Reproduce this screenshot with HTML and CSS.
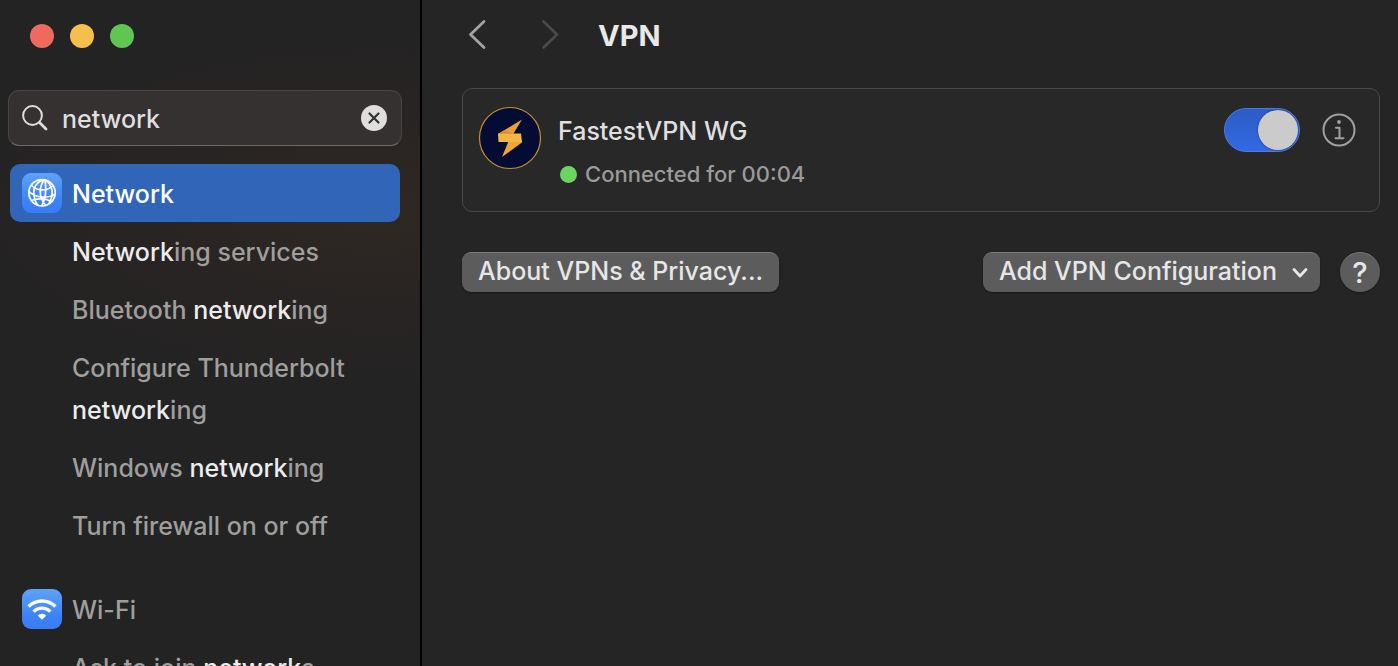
FILE: index.html
```html
<!DOCTYPE html>
<html lang="en">
<head>
    <meta charset="utf-8">
    <meta name="viewport" content="width=device-width, initial-scale=1.0">
    <title>VPN</title>
    <link rel="stylesheet" href="styles.css">
</head>
<body>
    <div class="window">
        <aside class="sidebar">
            <div class="lights">
                <button class="light red" aria-label="Close"></button>
                <button class="light yellow" aria-label="Minimize"></button>
                <button class="light green" aria-label="Zoom"></button>
            </div>
            <div class="search">
                <svg class="search-icon" width="26" height="26" viewBox="0 0 26 26" fill="none" stroke="#dfdedd" stroke-linecap="round">
                    <circle cx="10.5" cy="10.5" r="9.4" stroke-width="2"/>
                    <path d="M17.5 17.5L24 24" stroke-width="2.8"/>
                </svg>
                <input type="text" class="search-text" value="network" aria-label="Search">
                <button class="clear" aria-label="Clear">
                    <svg width="26" height="26" viewBox="0 0 26 26">
                        <circle cx="13" cy="13" r="13" fill="#dfdedd"/>
                        <path d="M8.5 8.5L17.5 17.5M17.5 8.5L8.5 17.5" stroke="#353130" stroke-width="2.2" stroke-linecap="round"/>
                    </svg>
                </button>
            </div>
            <nav class="results">
                <ul class="group">
                    <li>
                        <a href="#" class="row active">
                            <svg class="icon" width="40" height="40" viewBox="0 0 40 40">
                                <defs>
                                    <linearGradient id="blue" x1="0" y1="0" x2="0" y2="1">
                                        <stop offset="0" stop-color="#5fa2f9"/>
                                        <stop offset="0.7" stop-color="#3b82f7"/>
                                        <stop offset="1" stop-color="#3a7df6"/>
                                    </linearGradient>
                                </defs>
                                <rect width="40" height="40" rx="9" fill="url(#blue)"/>
                                <g fill="none" stroke="#fff" stroke-width="1.7" stroke-linecap="round">
                                    <circle cx="20" cy="19.8" r="13.2"/>
                                    <path d="M21 6.8C15 9.500 11.500 14 11.800 20C12 25 13.500 29 15.500 31.800"/>
                                    <path d="M22 6.800C18 13 17.500 20 19.500 25.500C20.500 28.500 22 30.500 23.500 32"/>
                                    <path d="M23 6.800C24 13 24 20 22.500 25.500C22 28 21 30.500 20 32.500"/>
                                    <path d="M24 7.300C28.500 11 30.500 16 30.200 21C30 24.500 28.500 28 26.500 31"/>
                                    <path d="M9.500 12.500C14.500 17.500 24 19 30.500 13"/>
                                    <path d="M7 18.500C12 24 25 26.500 32.800 21.500"/>
                                    <path d="M10 27.300C15 25 24 25.500 29.500 28.500"/>
                                </g>
                            </svg>
                            <span class="label">Network</span>
                        </a>
                    </li>
                    <li><a href="#" class="row"><span class="label"><b>Network</b>ing services</span></a></li>
                    <li><a href="#" class="row"><span class="label">Bluetooth <b>network</b>ing</span></a></li>
                    <li><a href="#" class="row"><span class="label">Configure Thunderbolt <b>network</b>ing</span></a></li>
                    <li><a href="#" class="row"><span class="label">Windows <b>network</b>ing</span></a></li>
                    <li><a href="#" class="row"><span class="label">Turn firewall on or off</span></a></li>
                </ul>
                <ul class="group">
                    <li>
                        <a href="#" class="row">
                            <svg class="icon" width="40" height="40" viewBox="0 0 40 40">
                                <rect width="40" height="40" rx="9" fill="url(#blue)"/>
                                <g fill="none" stroke="#fff" stroke-width="3.4">
                                    <path d="M6.600 17.500A19 19 0 0 1 33.400 17.500"/>
                                    <path d="M11.600 22.600A12 12 0 0 1 28.400 22.600"/>
                                </g>
                                <path d="M20 30.800L15.700 26.600A6.200 6.200 0 0 1 24.300 26.600Z" fill="#fff"/>
                            </svg>
                            <span class="label">Wi-Fi</span>
                        </a>
                    </li>
                    <li><a href="#" class="row"><span class="label">Ask to join <b>network</b>s</span></a></li>
                </ul>
            </nav>
        </aside>
        <main class="content">
            <header class="top">
                <button class="nav" aria-label="Back">
                    <svg width="20" height="32" viewBox="0 0 20 32" fill="none" stroke="#a3a3a3" stroke-width="2.8" stroke-linecap="round" stroke-linejoin="round">
                        <path d="M17 2.500L3.500 15.500L17 28.500"/>
                    </svg>
                </button>
                <button class="nav" aria-label="Forward" disabled>
                    <svg width="20" height="32" viewBox="0 0 20 32" fill="none" stroke="#4a4a4a" stroke-width="2.8" stroke-linecap="round" stroke-linejoin="round">
                        <path d="M4.500 2.500L18 15.500L4.500 28.500"/>
                    </svg>
                </button>
                <h1 class="title">VPN</h1>
            </header>
            <section class="card">
                <svg class="logo" width="64" height="64" viewBox="0 0 64 64">
                    <circle cx="32" cy="32" r="30.500" fill="#040c33" stroke="#c48f35" stroke-width="1.200"/>
                    <path d="M44 13.500L20 28L20.500 30H34Z" fill="#e9a03a"/>
                    <path d="M24 51L44 36.500L43.500 34H31Z" fill="#f0a53c"/>
                    <path d="M20 27.500H43L44 36H20.500Z" fill="#f0b840"/>
                    <path d="M20 28L26 24.300L35.500 27.500Z" fill="#d98f34"/>
                </svg>
                <div class="info">
                    <div class="name" id="vpn-name">FastestVPN WG</div>
                    <div class="status"><span class="dot"></span>Connected for 00:04</div>
                </div>
                <input type="checkbox" class="switch" role="switch" aria-labelledby="vpn-name" checked>
                <button class="detail" aria-label="Details">
                    <svg width="34" height="34" viewBox="0 0 34 34" fill="none" stroke="#a0a0a0" stroke-width="2">
                        <circle cx="17" cy="17" r="15.500"/>
                        <circle cx="17" cy="9" r="1.900" fill="#a0a0a0" stroke="none"/>
                        <path d="M14 14.800H17.500V25M13.500 25.300H21.500" stroke-linecap="round" stroke-linejoin="round"/>
                    </svg>
                </button>
            </section>
            <div class="actions">
                <button class="btn">About VPNs &amp; Privacy...</button>
                <div class="pulldown">
                    <select class="btn" aria-label="Add VPN Configuration">
                        <option>Add VPN Configuration</option>
                    </select>
                    <svg class="arrow" width="16" height="12" viewBox="0 0 16 12" fill="none" stroke="#e6e6e6" stroke-width="2.800" stroke-linecap="round" stroke-linejoin="round">
                        <path d="M2 2.500L8 9L14 2.500"/>
                    </svg>
                </div>
                <button class="help" aria-label="Help">?</button>
            </div>
        </main>
    </div>
</body>
</html>
```
FILE: styles.css
```css
*{
    box-sizing: border-box;
}
body{
    margin: 0;
    background-color: rgb(37,37,37);
    font-family: Inter, "Liberation Sans", sans-serif;
    font-size: 25px;
    font-weight: 500;
    color: rgb(223,223,223);
}
button,input,select{
    font: inherit;
    color: inherit;
    margin: 0;
    padding: 0;
    border: none;
    background: none;
}
svg{
    display: block;
}
.window{
    display: flex;
    height: 100vh;
    overflow: hidden;
}
.sidebar{
    flex: none;
    width: 422px;
    border-right: 2px solid black;
    overflow: hidden;
    background: radial-gradient(ellipse 460px 190px at 380px 210px, rgb(46,40,34) 0, rgb(40,36,35) 50%, rgb(35,35,35) 100%);
}
.lights{
    display: flex;
    gap: 16px;
    padding: 24px 30px 42px;
}
.light{
    width: 24px;
    height: 24px;
    border-radius: 50%;
}
.red{
    background-color: rgb(238,106,95);
}
.yellow{
    background-color: rgb(245,191,79);
}
.green{
    background-color: rgb(97,197,84);
}
.search{
    display: flex;
    align-items: center;
    gap: 14px;
    height: 56px;
    margin: 0 18px 18px 8px;
    padding: 0 14px 0 13px;
    border: 1px solid rgb(73,69,68);
    border-bottom-color: rgb(108,104,102);
    border-radius: 11px;
    background-color: rgb(53,49,48);
}
.search-text{
    flex: 1;
    min-width: 0;
    padding-top: 2px;
    outline: none;
}
.results{
    margin: 0 20px 0 10px;
}
.group{
    list-style: none;
    margin: 0 0 26px;
    padding: 0;
}
.row{
    display: flex;
    align-items: flex-start;
    gap: 10px;
    padding: 9px 12px 7px;
    border-radius: 10px;
    line-height: 42px;
    color: rgb(159,158,157);
    text-decoration: none;
}
.row b{
    font-weight: 500;
    color: rgb(236,236,236);
}
.icon{
    flex: none;
}
/* rows with no icon keep the text on the same line */
.label:first-child{
    margin-left: 50px;
}
.active{
    background-color: rgb(49,101,184);
    color: white;
}
.content{
    flex: 1;
    min-width: 0;
    padding: 0 18px 0 40px;
}
.top{
    display: flex;
    align-items: center;
    height: 70px;
    margin-bottom: 18px;
    padding-left: 5px;
}
.nav{
    margin-right: 52px;
}
.nav + .title{
    margin: 0 0 0 -13px;
}
.title{
    font-size: 29px;
    font-weight: 700;
    color: rgb(233,233,233);
}
.card{
    display: flex;
    align-items: flex-start;
    height: 124px;
    padding: 17px 23px 17px 15px;
    border: 1px solid rgb(72,72,72);
    border-radius: 10px;
    background-color: rgb(40,40,40);
}
.info{
    flex: 1;
    margin-left: 16px;
}
.name{
    line-height: 50px;
}
.status{
    display: flex;
    align-items: center;
    gap: 8px;
    line-height: 36px;
    font-size: 22px;
    color: rgb(154,154,154);
}
.dot{
    width: 17px;
    height: 17px;
    margin-left: 2px;
    border-radius: 50%;
    background-color: rgb(108,213,95);
}
.switch{
    appearance: none;
    display: flex;
    justify-content: flex-end;
    width: 76px;
    height: 44px;
    margin: 2px 22px 0 0;
    padding: 1px;
    border: 1px solid rgb(76,124,226);
    border-radius: 22px;
    background: linear-gradient(rgb(43,92,198), rgb(51,105,226));
}
.switch::before{
    content: "";
    width: 40px;
    height: 40px;
    border-radius: 50%;
    background-color: rgb(203,203,203);
    box-shadow: 0 0 2px rgba(0,0,0,0.5);
}
.switch:not(:checked){
    justify-content: flex-start;
    border-color: rgb(85,85,85);
    background: rgb(65,65,65);
}
.detail{
    margin-top: 7px;
}
.actions{
    display: flex;
    margin-top: 40px;
}
.btn{
    appearance: none;
    height: 40px;
    padding: 0 16px 3px;
    border-top: 1px solid rgb(122,122,122);
    border-radius: 9px;
    background-color: rgb(92,92,92);
    box-shadow: 0 1px 2px rgba(0,0,0,0.4);
    color: rgb(230,230,230);
}
.pulldown{
    position: relative;
    margin-left: auto;
}
.pulldown .btn{
    padding-right: 42px;
}
.arrow{
    position: absolute;
    right: 12px;
    top: 15px;
    pointer-events: none;
}
.help{
    width: 40px;
    height: 40px;
    margin-left: 20px;
    border-top: 1px solid rgb(122,122,122);
    border-radius: 50%;
    background-color: rgb(92,92,92);
    box-shadow: 0 1px 2px rgba(0,0,0,0.4);
    font-size: 29px;
    color: rgb(230,230,230);
}
```
